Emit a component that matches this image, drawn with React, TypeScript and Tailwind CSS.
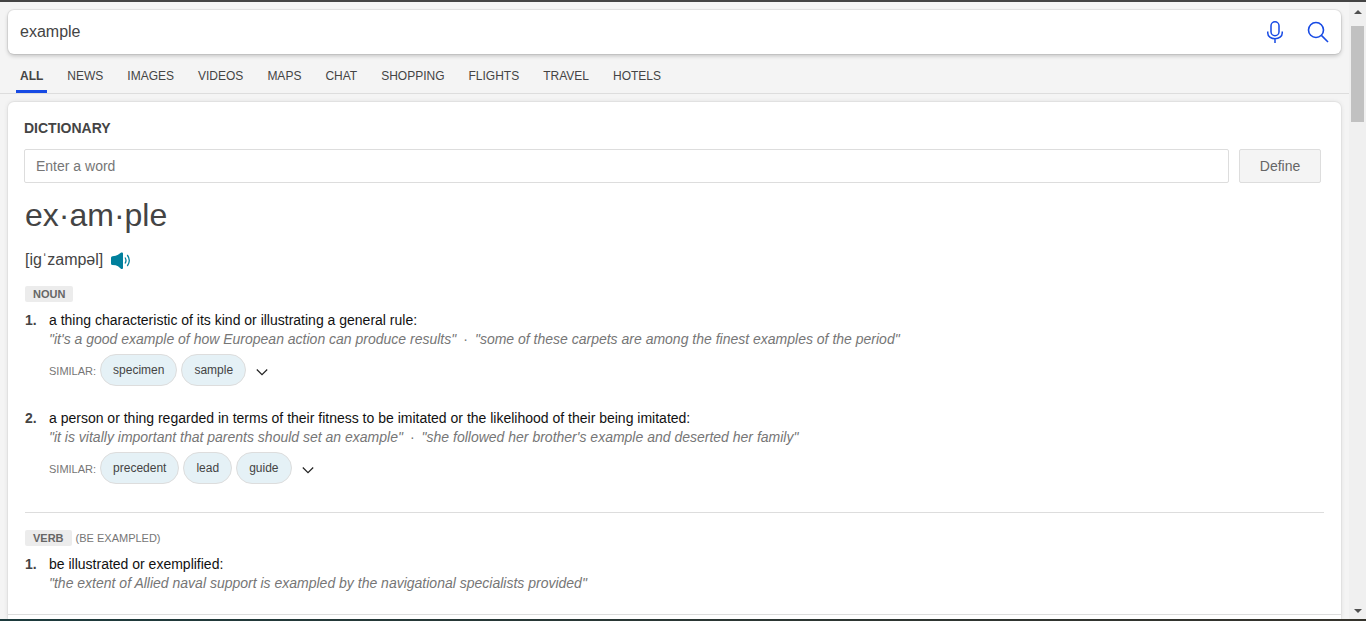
import { useState } from "react";

const tabs = ["ALL", "NEWS", "IMAGES", "VIDEOS", "MAPS", "CHAT", "SHOPPING", "FLIGHTS", "TRAVEL", "HOTELS"];

type Sense = { number: number; meaning: string; quotes: string[]; similar: string[] };

const nounSenses: Sense[] = [
  {
    number: 1,
    meaning: "a thing characteristic of its kind or illustrating a general rule:",
    quotes: [
      "it's a good example of how European action can produce results",
      "some of these carpets are among the finest examples of the period",
    ],
    similar: ["specimen", "sample"],
  },
  {
    number: 2,
    meaning: "a person or thing regarded in terms of their fitness to be imitated or the likelihood of their being imitated:",
    quotes: [
      "it is vitally important that parents should set an example",
      "she followed her brother's example and deserted her family",
    ],
    similar: ["precedent", "lead", "guide"],
  },
];

const verbSenses: Sense[] = [
  {
    number: 1,
    meaning: "be illustrated or exemplified:",
    quotes: ["the extent of Allied naval support is exampled by the navigational specialists provided"],
    similar: [],
  },
];

function MicIcon() {
  return (
    <svg width="16" height="22" viewBox="0 0 16 22" fill="none" stroke="#174ae4" strokeWidth="1.5" aria-hidden="true">
      <rect x="4" y=".75" width="8" height="14" rx="4" />
      <path d="M.75 10.500V12C.75 15.500 4 17.750 8 17.750s7.250-2.250 7.250-5.750v-1.500M8 17.750V22" />
    </svg>
  );
}

function SearchIcon() {
  return (
    <svg width="22" height="22" viewBox="0 0 22 22" fill="none" stroke="#174ae4" strokeWidth="1.6" aria-hidden="true">
      <circle cx="9" cy="9" r="7.5" />
      <path d="M14.4 14.4L21 21" />
    </svg>
  );
}

function SpeakerIcon() {
  return (
    <svg width="20" height="18" viewBox="0 0 20 18" aria-hidden="true">
      <path
        d="M1.500 4.200Q5 4.200 7 2.800L10.200.6Q12 0 12 1.500v14.500q0 1.500-1.800.900L7 14.200Q5 13 1.500 13 0 13 0 11.500V5.700Q0 4.200 1.500 4.200Z"
        fill="#00809d"
      />
      <path d="M14 5.500q2 3 0 6M16.300 3q4 5.500 0 11" fill="none" stroke="#00809d" strokeWidth="1.300" />
    </svg>
  );
}

function ChevronIcon() {
  return (
    <svg width="12" height="8" viewBox="0 0 12 8" fill="none" stroke="#222" strokeWidth="1.2" aria-hidden="true">
      <path d="M.8 1.500L6 6.700l5.200-5.200" />
    </svg>
  );
}

function SenseItem({ sense }: { sense: Sense }) {
  return (
    <li className="flex text-sm leading-[19px]">
      <span className="w-6 shrink-0 font-bold text-[#444]">{sense.number}.</span>
      <div className="min-w-0">
        <p className="text-[#111]">{sense.meaning}</p>
        <p className="text-[#767676]">
          {sense.quotes.map((quote, i) => (
            <span key={quote}>
              {i > 0 && <span className="px-[7px]">·</span>}
              <i>"{quote}"</i>
            </span>
          ))}
        </p>
        {sense.similar.length > 0 && (
          <div className="mt-[5px] flex items-center gap-1">
            <span className="pt-0.5 text-[11px] text-[#767676]">SIMILAR:</span>
            {sense.similar.map((word) => (
              <a
                key={word}
                href="#"
                className="flex h-8 items-center rounded-full border border-[#ddd] bg-[#e5f1f6] px-3 text-xs text-[#444]"
              >
                {word}
              </a>
            ))}
            <button type="button" aria-label="More similar words" className="px-1.5 pt-1">
              <ChevronIcon />
            </button>
          </div>
        )}
      </div>
    </li>
  );
}

function PartOfSpeech({ name, note }: { name: string; note?: string }) {
  return (
    <div className="flex items-center gap-1 text-[11px] leading-4 text-[#767676]">
      <h3 className="rounded-xs bg-[#ececec] px-2 font-bold text-[#666]">{name}</h3>
      {note && <span>{note}</span>}
    </div>
  );
}

export default function App() {
  const [query, setQuery] = useState("example");
  const [word, setWord] = useState("");

  return (
    <div className="flex min-h-screen flex-col border-t-2 border-[#444] bg-[#f4f4f4] font-['Liberation_Sans',Arial,sans-serif] text-[#444]">
      <div className="flex grow">
        <div className="flex min-w-0 grow flex-col pt-2">
          <form
            role="search"
            onSubmit={(e) => e.preventDefault()}
            className="mx-2 flex h-11 items-center rounded-md bg-white pr-3 pl-3 shadow-[0_0_0_1px_rgba(0,0,0,0.06),0_2px_4px_rgba(0,0,0,0.2)]"
          >
            <input
              aria-label="Search"
              value={query}
              onChange={(e) => setQuery(e.target.value)}
              className="min-w-0 grow bg-transparent text-base outline-none"
            />
            <button type="button" aria-label="Search by voice" className="mr-6">
              <MicIcon />
            </button>
            <button type="submit" aria-label="Search">
              <SearchIcon />
            </button>
          </form>

          <nav className="flex h-10 items-end gap-4 border-b border-[#ddd] pl-4 text-xs">
            {tabs.map((tab, i) => (
              <a
                key={tab}
                href="#"
                className={
                  i === 0
                    ? "border-b-3 border-[#174ae4] px-1 pb-1.5 font-bold"
                    : "border-b-3 border-transparent px-1 pb-1.5"
                }
              >
                {tab}
              </a>
            ))}
          </nav>

          <main className="mx-2 mt-2 grow rounded-t-md bg-white shadow-[0_0_0_1px_rgba(0,0,0,0.03),0_0_5px_rgba(0,0,0,0.1)]">
            <div className="px-4 pt-4">
              <h1 className="text-sm font-bold">DICTIONARY</h1>
              <form onSubmit={(e) => e.preventDefault()} className="mt-[11px] mr-1 flex gap-2.5 text-sm">
                <input
                  aria-label="Enter a word"
                  placeholder="Enter a word"
                  value={word}
                  onChange={(e) => setWord(e.target.value)}
                  className="h-[34px] min-w-0 grow rounded-xs border border-[#ddd] bg-white px-[11px] outline-none placeholder:text-[#767676]"
                />
                <button type="submit" className="w-[82px] rounded-xs border border-[#ddd] bg-[#f4f4f4] text-[#666]">
                  Define
                </button>
              </form>
            </div>

            <div className="px-[17px] pt-3 pb-[21px]">
              <h2 className="text-[32px] leading-10">ex·am·ple</h2>
              <div className="mt-[13px] flex items-center gap-2 text-base">
                <span>[iɡˈzampəl]</span>
                <button type="button" aria-label="Listen to pronunciation" className="pt-0.5">
                  <SpeakerIcon />
                </button>
              </div>
              <section className="mt-3.5">
                <PartOfSpeech name="NOUN" />
                <ol className="mt-[9px] flex flex-col gap-[23px]">
                  {nounSenses.map((sense) => (
                    <SenseItem key={sense.number} sense={sense} />
                  ))}
                </ol>
              </section>
              <section className="mt-7 border-t border-[#ddd] pt-[17px]">
                <PartOfSpeech name="VERB" note="(BE EXAMPLED)" />
                <ol className="mt-[9px]">
                  {verbSenses.map((sense) => (
                    <SenseItem key={sense.number} sense={sense} />
                  ))}
                </ol>
              </section>
            </div>
            <hr className="border-[#ddd]" />
          </main>
        </div>

        <div aria-hidden="true" className="flex w-[17px] shrink-0 flex-col items-center bg-[#f0f0f0] pt-2 pb-1.5">
          <svg width="8" height="4" viewBox="0 0 8 4" fill="#505050">
            <path d="M4 0l4 4H0z" />
          </svg>
          <div className="mt-3 h-24 w-[13px] bg-[#c1c1c1]" />
          <svg className="mt-auto" width="8" height="4" viewBox="0 0 8 4" fill="#505050">
            <path d="M0 0h8L4 4z" />
          </svg>
        </div>
      </div>
      <div className="h-0.5 bg-linear-to-r from-[#1c3a3c] to-[#35332c]" />
    </div>
  );
}
